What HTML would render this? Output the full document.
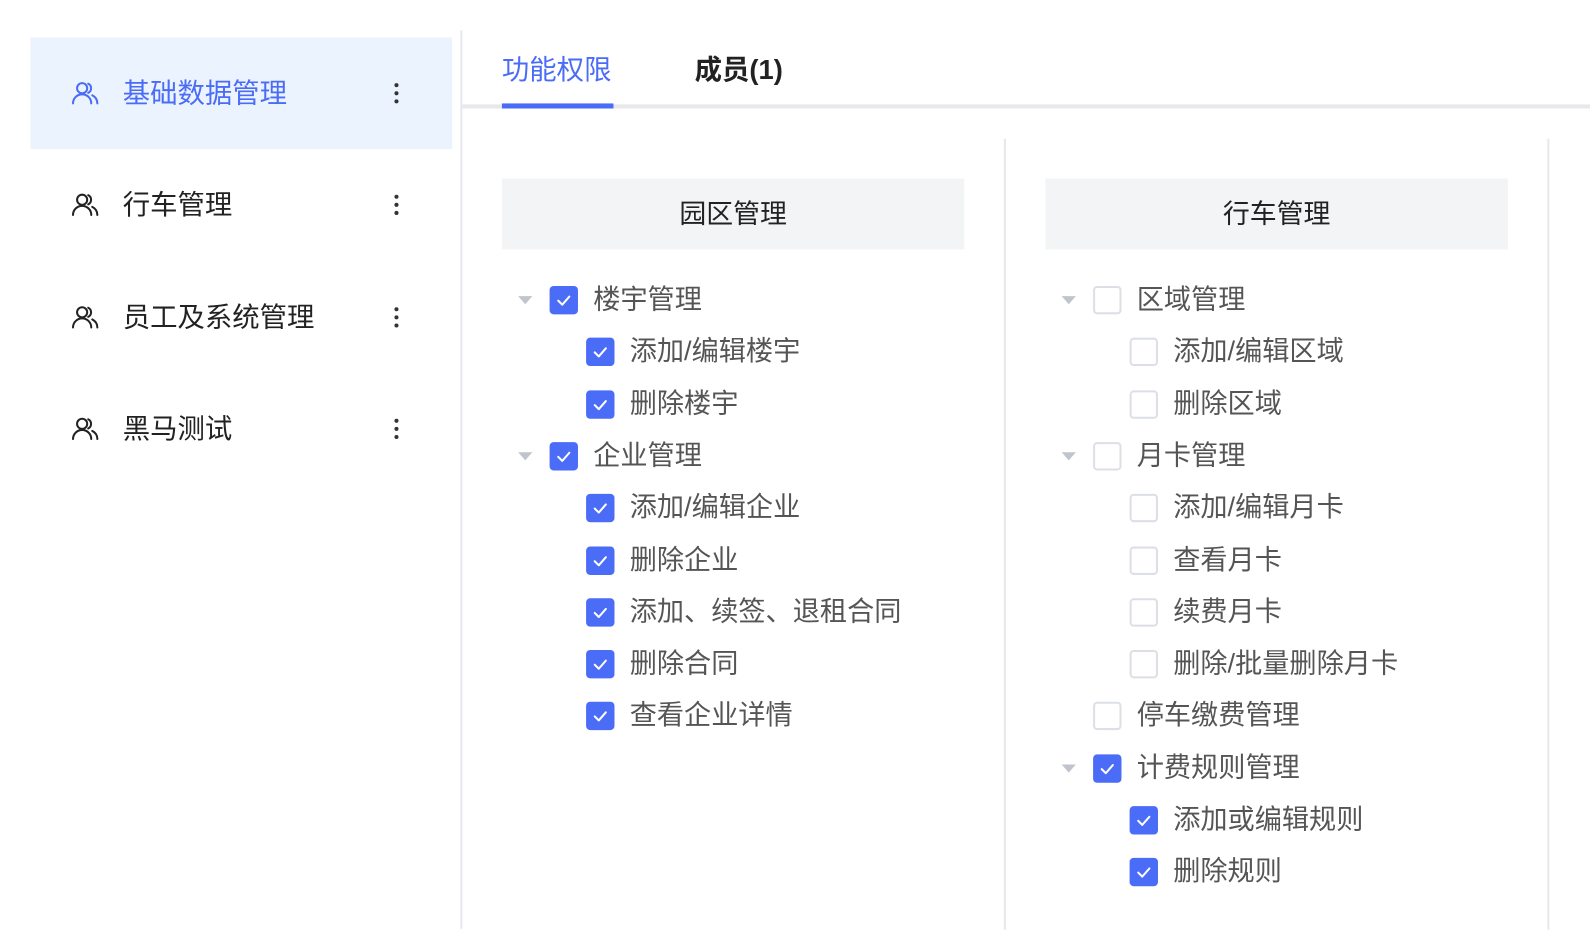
<!DOCTYPE html>
<html><head><meta charset="utf-8"><style>
*{margin:0;padding:0;box-sizing:border-box}
body{width:1590px;height:916px;background:#fff;font-family:"Liberation Sans","Noto Sans CJK SC",sans-serif;position:relative;overflow:hidden}
#wrap{position:absolute;left:0;top:0;width:1568px;height:904px;transform:scale(1.014);transform-origin:0 0}
.abs{position:absolute}
.dots i{display:block;width:4px;height:4px;border-radius:2px;background:#333;margin-bottom:4px}
.hdr{top:176px;width:456px;height:70px;background:#f3f4f6;font-size:26.5px;color:#222;text-align:center;line-height:70px}
.cb{position:absolute;width:28px;height:28px;border-radius:4px}
.on{background:#4a6cf7}
.off{border:2px solid #dcdfe6;background:#fff}
.arr{position:absolute;width:0;height:0;border-left:7px solid transparent;border-right:7px solid transparent;border-top:8px solid #c0c4cc}
.lbl{position:absolute;font-size:26.8px;color:#555;line-height:28px;white-space:nowrap}
</style></head><body>
<div id="wrap">
<div class="abs" style="left:30px;top:37px;width:416px;height:110px;background:#ebf3fe"></div>
<div class="abs" style="left:454px;top:30px;width:2px;height:886px;background:#e6e8ec"></div>

<div id="sb"></div>

<div class="abs" style="left:495px;top:51px;font-size:27px;color:#4a6cf7;line-height:36px">功能权限</div>
<div class="abs" style="left:685px;top:51px;font-size:27px;color:#222;line-height:36px;font-weight:bold">成员(1)</div>
<div class="abs" style="left:456px;top:103px;width:1134px;height:4px;background:#e6e8ec"></div>
<div class="abs" style="left:495px;top:102px;width:110px;height:5px;background:#4a6cf7"></div>

<div class="abs" style="left:990px;top:137px;width:2px;height:780px;background:#e6e8ec"></div>
<div class="abs" style="left:1526px;top:137px;width:2px;height:780px;background:#e6e8ec"></div>

<div class="abs hdr" style="left:495px">园区管理</div>
<div class="abs hdr" style="left:1031px">行车管理</div>

<div id="tree"></div>
</div>
<script>
var sbh='';
[['基础数据管理',37,'#4a6cf7'],['行车管理',147,'#222'],['员工及系统管理',258,'#222'],['黑马测试',368,'#222']].forEach(function(s){
sbh+='<div class="abs" style="left:30px;top:'+s[1]+'px;width:416px;height:110px">'+
'<svg class="abs" style="left:40px;top:42px" width="28" height="26" viewBox="0 0 28 26" fill="none" stroke="'+s[2]+'" stroke-width="2" stroke-linecap="round"><circle cx="11" cy="8" r="5"/><path d="M2 23c0-5 4-9 9-9s9 4 9 9"/><path d="M17 3.5a5 5 0 0 1 0 9"/><path d="M21 15c3 1.5 5 4.5 5 8"/></svg>'+
'<div class="abs" style="left:91px;top:0;line-height:110px;font-size:27px;color:'+s[2]+'">'+s[0]+'</div>'+
'<div class="abs dots" style="left:359px;top:45px"><i></i><i></i><i></i></div></div>';
});
document.getElementById('sb').innerHTML=sbh;
var rows=[
[0,1,1,'楼宇管理',1,1,'区域管理',0],
[1,1,0,'添加/编辑楼宇',1,0,'添加/编辑区域',0],
[2,1,0,'删除楼宇',1,0,'删除区域',0],
[3,1,1,'企业管理',1,1,'月卡管理',0],
[4,1,0,'添加/编辑企业',1,0,'添加/编辑月卡',0],
[5,1,0,'删除企业',1,0,'查看月卡',0],
[6,1,0,'添加、续签、退租合同',1,0,'续费月卡',0],
[7,1,0,'删除合同',1,0,'删除/批量删除月卡',0],
[8,1,0,'查看企业详情',0,2,'停车缴费管理',0],
[9,0,0,'',0,1,'计费规则管理',1],
[10,0,0,'',0,0,'添加或编辑规则',1],
[11,0,0,'',0,0,'删除规则',1]];
var h='';
function item(x0,level,txt,on,y){
 var cx = level>=1?x0+47:x0+83;
 if(level==1) h+='<div class="arr" style="left:'+(x0+16)+'px;top:'+(y-4)+'px"></div>';
 h+='<div class="cb '+(on?'on':'off')+'" style="left:'+cx+'px;top:'+(y-14)+'px">'+(on?'<svg width="28" height="28" viewBox="0 0 28 28"><path d="M8.5 14.5l4 4 7-8" fill="none" stroke="#fff" stroke-width="2" stroke-linecap="round" stroke-linejoin="round"/></svg>':'')+'</div>';
 h+='<div class="lbl" style="left:'+(cx+43)+'px;top:'+(y-15)+'px">'+txt+'</div>';
}
rows.forEach(function(r){
 var y=296+r[0]*51.3;
 if(r[1]) item(495,r[2],r[3],1,y);
 item(1031,r[5],r[6],r[7],y);
});
document.getElementById('tree').innerHTML=h;
</script>
</body></html>
